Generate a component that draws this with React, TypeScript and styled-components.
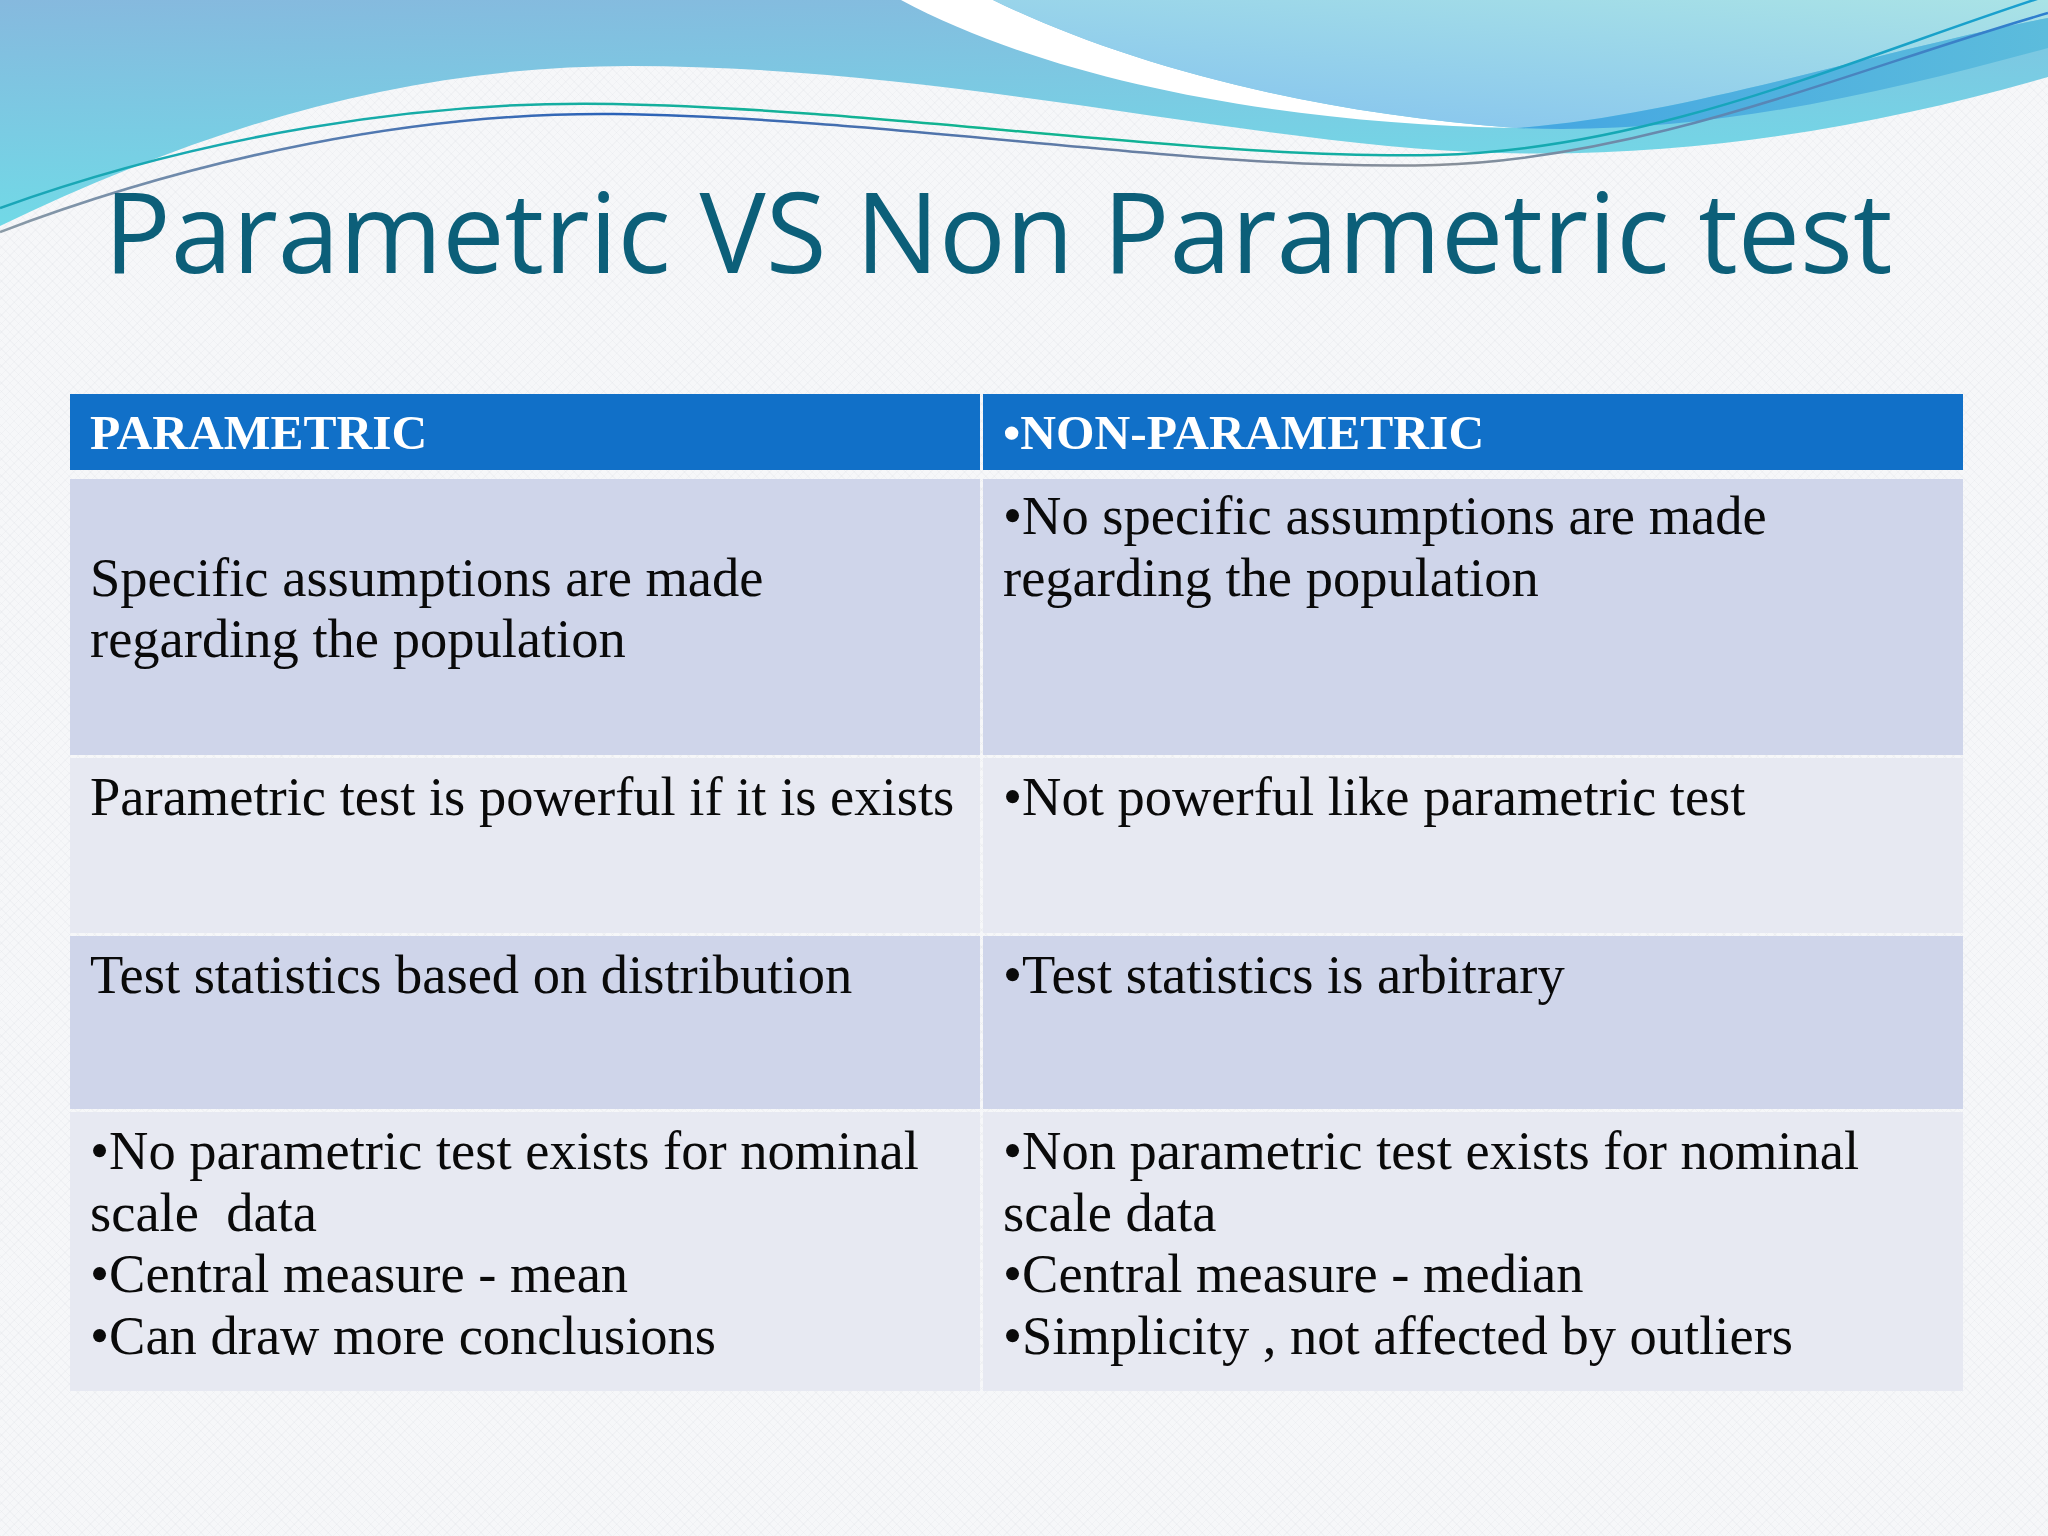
import React from "react";
import styled, { createGlobalStyle } from "styled-components";

const GlobalStyle = createGlobalStyle`
  html, body {
    margin: 0;
    padding: 0;
  }
  body {
    background: #f6f7f9;
  }
`;

type Cell = { lines: string[]; middle?: boolean; pad?: number };
type Row = { tone: "dark" | "light"; height: number; left: Cell; right: Cell };

const rows: Row[] = [
  {
    tone: "dark",
    height: 276,
    left: { lines: ["Specific assumptions are made", "regarding the population"], middle: true },
    right: { lines: ["•No specific assumptions are made", "regarding the population"], pad: 6 },
  },
  {
    tone: "light",
    height: 175,
    left: { lines: ["Parametric test is powerful if it is exists"] },
    right: { lines: ["•Not powerful like parametric test"] },
  },
  {
    tone: "dark",
    height: 173,
    left: { lines: ["Test statistics based on distribution"] },
    right: { lines: ["•Test statistics is arbitrary"] },
  },
  {
    tone: "light",
    height: 279,
    left: {
      lines: [
        "•No parametric test exists for nominal",
        "scale\u00a0 data",
        "•Central measure - mean",
        "•Can draw more conclusions",
      ],
    },
    right: {
      lines: [
        "•Non parametric test exists for nominal",
        "scale data",
        "•Central measure - median",
        "•Simplicity , not affected by outliers",
      ],
    },
  },
];

const Waves: React.FC = () => (
  <WaveArt viewBox="0 0 2048 300" width="2048" height="300">
    <defs>
      <linearGradient id="base" x1="0" y1="0" x2="0.25" y2="1">
        <stop offset="0" stopColor="#86b9de" />
        <stop offset="1" stopColor="#70dbe7" />
      </linearGradient>
      <linearGradient id="light" x1="1" y1="0" x2="0.2" y2="1">
        <stop offset="0" stopColor="#aae3e6" />
        <stop offset="1" stopColor="#86c4ee" />
      </linearGradient>
      <linearGradient id="band" x1="0" y1="0" x2="1" y2="0">
        <stop offset="0" stopColor="#44a6e2" />
        <stop offset="1" stopColor="#5cbcdc" />
      </linearGradient>
      <linearGradient id="lineA" x1="0" y1="0" x2="1" y2="0">
        <stop offset="0" stopColor="#1aa6b8" />
        <stop offset="0.5" stopColor="#10b48e" />
        <stop offset="1" stopColor="#1a9fd0" />
      </linearGradient>
      <linearGradient id="lineB" x1="0" y1="0" x2="1" y2="0">
        <stop offset="0" stopColor="#8a9aa6" />
        <stop offset="0.3" stopColor="#2a62b8" />
        <stop offset="0.7" stopColor="#8a9098" />
        <stop offset="1" stopColor="#2c7ed0" />
      </linearGradient>
    </defs>
    <path
      d="M0,0 H2048 V77 C1880,125 1700,158 1500,153 C1250,146 950,66 630,66 C400,66 200,130 0,226 Z"
      fill="url(#base)"
    />
    <path d="M901,0 C1050,80 1280,124 1516,128 C1300,112 1120,62 993,0 Z" fill="#ffffff" />
    <path
      d="M993,0 C1120,62 1300,112 1516,128 C1680,116 1860,55 2048,18 V0 Z"
      fill="url(#light)"
    />
    <path
      d="M1516,128 C1680,116 1860,55 2048,18 V48 C1880,94 1700,136 1516,128 Z"
      fill="url(#band)"
    />
    <path
      d="M0,208 C200,136 420,100 614,104 C900,110 1200,160 1436,155 C1650,150 1850,60 2040,-2"
      fill="none"
      stroke="url(#lineA)"
      strokeWidth="2.5"
    />
    <path
      d="M0,232 C200,156 420,112 614,114 C900,118 1200,172 1436,165 C1650,158 1850,70 2048,13"
      fill="none"
      stroke="url(#lineB)"
      strokeWidth="2.5"
    />
  </WaveArt>
);

const App: React.FC = () => {
  return (
    <>
      <GlobalStyle />
      <Slide>
        <Waves />
        <Title>Parametric VS Non Parametric test</Title>
        <Table>
          <HeadCell>PARAMETRIC</HeadCell>
          <HeadCell>•NON-PARAMETRIC</HeadCell>
          {rows.map((row, i) => (
            <React.Fragment key={i}>
              <BodyCell $tone={row.tone} $height={row.height} $middle={row.left.middle}>
                <CellText>
                  {row.left.lines.map((l, j) => (
                    <Line key={j}>{l}</Line>
                  ))}
                </CellText>
              </BodyCell>
              <BodyCell $tone={row.tone} $height={row.height} $pad={row.right.pad}>
                <CellText>
                  {row.right.lines.map((l, j) => (
                    <Line key={j}>{l}</Line>
                  ))}
                </CellText>
              </BodyCell>
            </React.Fragment>
          ))}
        </Table>
      </Slide>
    </>
  );
};

const Slide = styled.div`
  position: relative;
  width: 2048px;
  height: 1536px;
  overflow: hidden;
  background-color: #f6f7f9;
  background-image: repeating-linear-gradient(
      45deg,
      rgba(200, 204, 212, 0.12) 0px,
      rgba(200, 204, 212, 0.12) 1px,
      transparent 1px,
      transparent 6px
    ),
    repeating-linear-gradient(
      -45deg,
      rgba(200, 204, 212, 0.12) 0px,
      rgba(200, 204, 212, 0.12) 1px,
      transparent 1px,
      transparent 6px
    );
  display: flex;
  flex-direction: column;
`;

const WaveArt = styled.svg`
  position: absolute;
  top: 0;
  left: 0;
  display: block;
  pointer-events: none;
`;

const Title = styled.h1`
  position: relative;
  margin: 0;
  padding: 175px 0 0 104px;
  font-family: "Open Sans", "Noto Sans", sans-serif;
  font-weight: 400;
  font-size: 111px;
  line-height: 1;
  color: #0c5f79;
  white-space: nowrap;
`;

const Table = styled.div`
  position: relative;
  margin: 108px 0 0 70px;
  display: grid;
  grid-template-columns: 910px 980px;
  column-gap: 3px;
  row-gap: 3px;
  font-family: "Liberation Serif", "Times New Roman", serif;
`;

const HeadCell = styled.div`
  height: 76px;
  margin-bottom: 6px;
  background: #1170c8;
  color: #ffffff;
  font-weight: 700;
  font-size: 49.5px;
  display: flex;
  align-items: center;
  padding: 0 20px;
  white-space: nowrap;
`;

const BodyCell = styled.div<{
  $tone: "dark" | "light";
  $height: number;
  $middle?: boolean;
  $pad?: number;
}>`
  height: ${(p) => p.$height}px;
  box-sizing: border-box;
  background: ${(p) => (p.$tone === "dark" ? "#cfd5ea" : "#e7e9f2")};
  padding: ${(p) => (p.$middle ? 0 : p.$pad ?? 8)}px 20px ${(p) => (p.$middle ? 18 : 0)}px 20px;
  display: flex;
  align-items: ${(p) => (p.$middle ? "center" : "flex-start")};
`;

const CellText = styled.div`
  color: #0a0a0a;
  font-size: 54.5px;
  line-height: 61.5px;
`;

const Line = styled.div`
  white-space: pre;
`;

export default App;
